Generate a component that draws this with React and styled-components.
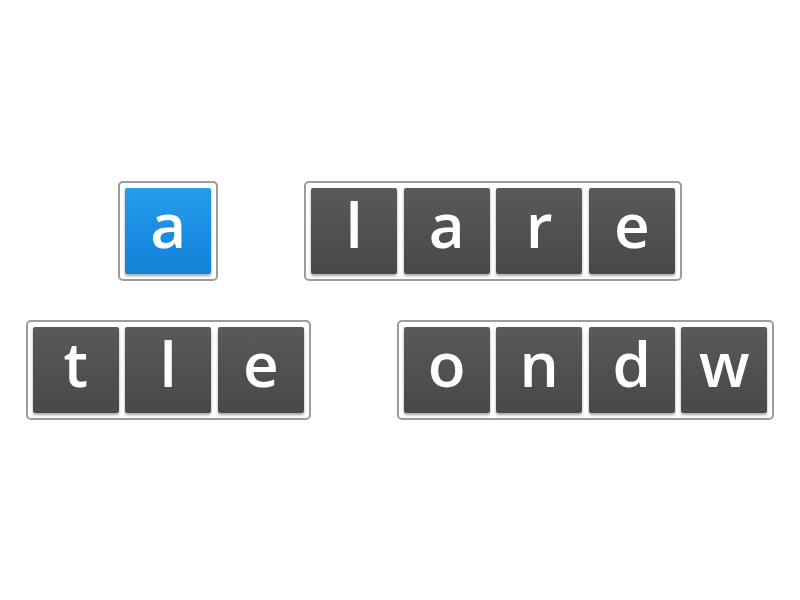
import React from "react";
import styled, { createGlobalStyle } from "styled-components";

const GlobalStyle = createGlobalStyle`
  html, body {
    margin: 0;
    padding: 0;
    background: #ffffff;
    font-family: "Open Sans", "Liberation Sans", sans-serif;
  }
`;

const Page = styled.div`
  min-height: 100vh;
  display: flex;
  align-items: center;
  justify-content: center;
`;

const Board = styled.div`
  display: flex;
  flex-wrap: wrap;
  justify-content: center;
  column-gap: 86px;
  row-gap: 39px;
  width: 800px;
`;

const Group = styled.div`
  display: flex;
  gap: 6.5px;
  padding: 5px;
  border: 2px solid #9c9c9c;
  border-radius: 5px;
  background: #ffffff;
`;

const Tile = styled.div`
  width: 86px;
  height: 86px;
  display: flex;
  align-items: center;
  justify-content: center;
  border-radius: 2px;
  color: #ffffff;
  font-size: 62px;
  font-weight: 600;
  line-height: 1;
  padding-bottom: 14px;
  box-sizing: border-box;
  background: ${(p) =>
    p.$active
      ? "linear-gradient(180deg, #279ce9 0%, #1a8de2 55%, #1482d6 100%)"
      : "linear-gradient(180deg, #5a5a5a 0%, #505050 50%, #494949 100%)"};
  box-shadow: 0 2px 3px rgba(0, 0, 0, 0.35);
`;

const groups = [
  { letters: ["a"], active: true },
  { letters: ["l", "a", "r", "e"] },
  { letters: ["t", "l", "e"] },
  { letters: ["o", "n", "d", "w"] },
];

export default function App() {
  return (
    <>
      <GlobalStyle />
      <Page>
        <Board>
          {groups.map((g, i) => (
            <Group key={i}>
              {g.letters.map((l, j) => (
                <Tile key={j} $active={g.active}>
                  {l}
                </Tile>
              ))}
            </Group>
          ))}
        </Board>
      </Page>
    </>
  );
}
